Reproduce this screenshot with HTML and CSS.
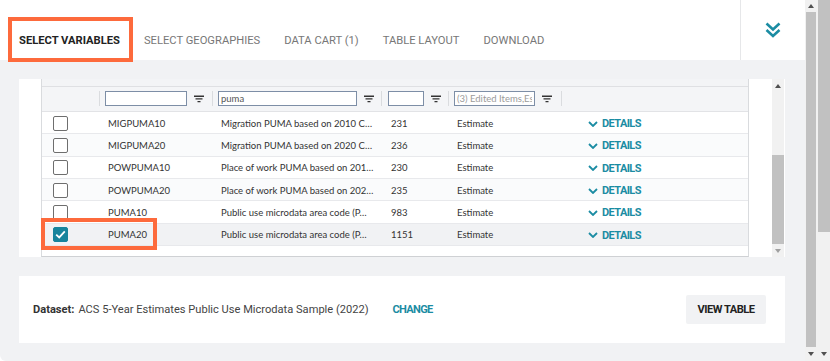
FILE: index.html
```html
<!DOCTYPE html>
<html lang="en">
<head>
<meta charset="utf-8">
<title>Select Variables</title>
<link rel="stylesheet" href="styles.css">
</head>
<body>
<div class="page">
  <div class="modal">
    <header class="modal-head">
      <nav class="tabs">
        <span class="tab active">SELECT VARIABLES</span>
        <span class="tab">SELECT GEOGRAPHIES</span>
        <span class="tab">DATA CART (1)</span>
        <span class="tab">TABLE LAYOUT</span>
        <span class="tab">DOWNLOAD</span>
      </nav>
      <div class="head-toggle">
        <svg width="16" height="16" viewBox="0 0 16 16" aria-hidden="true">
          <polyline points="1.5,1.5 8,7.5 14.5,1.5" fill="none" stroke="#1b8ca3" stroke-width="2.6"/>
          <polyline points="1.5,8 8,14 14.5,8" fill="none" stroke="#1b8ca3" stroke-width="2.6"/>
        </svg>
      </div>
    </header>

    <div class="modal-body">
      <section class="card table-card">
        <div class="grid">
          <div class="grid-top"></div>
          <div class="row head-row">
            <div class="cell"></div>
            <div class="cell fcell"><span class="sep"></span><input class="finput w1" type="text"><svg class="ficon" width="12" height="8" viewBox="0 0 12 8"><path d="M1 1.2H11M2.5 3.9H9.5M4.5 6.6H7.5" stroke="#333" stroke-width="1.4" fill="none"/></svg></div>
            <div class="cell fcell"><span class="sep"></span><input class="finput w2" type="text" value="puma"><svg class="ficon" width="12" height="8" viewBox="0 0 12 8"><path d="M1 1.2H11M2.5 3.9H9.5M4.5 6.6H7.5" stroke="#333" stroke-width="1.4" fill="none"/></svg></div>
            <div class="cell fcell"><span class="sep"></span><input class="finput w3" type="text"><svg class="ficon" width="12" height="8" viewBox="0 0 12 8"><path d="M1 1.2H11M2.5 3.9H9.5M4.5 6.6H7.5" stroke="#333" stroke-width="1.4" fill="none"/></svg></div>
            <div class="cell fcell"><span class="sep"></span><input class="finput w4" type="text" placeholder="(3) Edited Items,Estimate"><svg class="ficon" width="12" height="8" viewBox="0 0 12 8"><path d="M1 1.2H11M2.5 3.9H9.5M4.5 6.6H7.5" stroke="#333" stroke-width="1.4" fill="none"/></svg></div>
            <div class="cell fcell"><span class="sep"></span></div>
          </div>

          <div class="row">
            <div class="cell cbcell"><span class="cb"></span></div>
            <div class="cell txt">MIGPUMA10</div>
            <div class="cell txt">Migration PUMA based on 2010 C…</div>
            <div class="cell txt num">231</div>
            <div class="cell txt">Estimate</div>
            <div class="cell dcell"><span class="details"><svg width="10" height="6" viewBox="0 0 10 6"><polyline points="1,1 5,5 9,1" fill="none" stroke="#1b8ca3" stroke-width="1.8"/></svg>DETAILS</span></div>
          </div>
          <div class="row alt">
            <div class="cell cbcell"><span class="cb"></span></div>
            <div class="cell txt">MIGPUMA20</div>
            <div class="cell txt">Migration PUMA based on 2020 C…</div>
            <div class="cell txt num">236</div>
            <div class="cell txt">Estimate</div>
            <div class="cell dcell"><span class="details"><svg width="10" height="6" viewBox="0 0 10 6"><polyline points="1,1 5,5 9,1" fill="none" stroke="#1b8ca3" stroke-width="1.8"/></svg>DETAILS</span></div>
          </div>
          <div class="row">
            <div class="cell cbcell"><span class="cb"></span></div>
            <div class="cell txt">POWPUMA10</div>
            <div class="cell txt">Place of work PUMA based on 201…</div>
            <div class="cell txt num">230</div>
            <div class="cell txt">Estimate</div>
            <div class="cell dcell"><span class="details"><svg width="10" height="6" viewBox="0 0 10 6"><polyline points="1,1 5,5 9,1" fill="none" stroke="#1b8ca3" stroke-width="1.8"/></svg>DETAILS</span></div>
          </div>
          <div class="row alt">
            <div class="cell cbcell"><span class="cb"></span></div>
            <div class="cell txt">POWPUMA20</div>
            <div class="cell txt">Place of work PUMA based on 202…</div>
            <div class="cell txt num">235</div>
            <div class="cell txt">Estimate</div>
            <div class="cell dcell"><span class="details"><svg width="10" height="6" viewBox="0 0 10 6"><polyline points="1,1 5,5 9,1" fill="none" stroke="#1b8ca3" stroke-width="1.8"/></svg>DETAILS</span></div>
          </div>
          <div class="row">
            <div class="cell cbcell"><span class="cb"></span></div>
            <div class="cell txt">PUMA10</div>
            <div class="cell txt">Public use microdata area code (P…</div>
            <div class="cell txt num">983</div>
            <div class="cell txt">Estimate</div>
            <div class="cell dcell"><span class="details"><svg width="10" height="6" viewBox="0 0 10 6"><polyline points="1,1 5,5 9,1" fill="none" stroke="#1b8ca3" stroke-width="1.8"/></svg>DETAILS</span></div>
          </div>
          <div class="row selected">
            <div class="cell cbcell"><span class="cb checked"><svg width="11" height="9" viewBox="0 0 11 9"><polyline points="1.2,4.6 4.2,7.4 9.8,1.4" fill="none" stroke="#fff" stroke-width="1.8"/></svg></span></div>
            <div class="cell txt">PUMA20</div>
            <div class="cell txt">Public use microdata area code (P…</div>
            <div class="cell txt num">1151</div>
            <div class="cell txt">Estimate</div>
            <div class="cell dcell"><span class="details"><svg width="10" height="6" viewBox="0 0 10 6"><polyline points="1,1 5,5 9,1" fill="none" stroke="#1b8ca3" stroke-width="1.8"/></svg>DETAILS</span></div>
          </div>
          <div class="grid-fill"></div>
        </div>

        <div class="vscroll inner-sb">
          <div class="sb-btn"><span class="arr-up"></span></div>
          <div class="sb-track"><div class="sb-thumb"></div></div>
          <div class="sb-btn"><span class="arr-down"></span></div>
        </div>
      </section>

      <section class="card footer-card">
        <span class="ds-label">Dataset:</span>
        <span class="ds-name">ACS 5-Year Estimates Public Use Microdata Sample (2022)</span>
        <span class="change">CHANGE</span>
        <span class="view-btn">VIEW TABLE</span>
      </section>
    </div>

    <div class="hl hl-tab"></div>
    <div class="hl hl-row"></div>
  </div>

  <div class="vscroll modal-sb">
    <div class="sb-btn"><span class="arr-up"></span></div>
    <div class="sb-track"><div class="sb-thumb"></div></div>
    <div class="sb-btn"><span class="arr-down"></span></div>
  </div>
  <div class="vscroll page-sb">
    <div class="sb-track"><div class="sb-thumb"></div></div>
    <div class="sb-btn"><span class="arr-down"></span></div>
  </div>
</div>
</body>
</html>
```

FILE: styles.css
```css
* { box-sizing: border-box; }

html, body {
  margin: 0;
  width: 830px;
  height: 361px;
  overflow: hidden;
  background: #ffffff;
  font-family: Roboto, "Liberation Sans", sans-serif;
}

.page {
  display: flex;
  height: 361px;
}

.modal {
  position: relative;
  width: 805px;
  height: 361px;
  display: flex;
  flex-direction: column;
  background: #f1f2f4;
  border-bottom-left-radius: 6px;
  overflow: hidden;
}

/* header */
.modal-head {
  height: 60px;
  flex: none;
  display: flex;
  background: #ffffff;
}

.tabs {
  flex: 1;
  display: flex;
  align-items: flex-start;
  padding: 34px 0 0 7px;
}

.tab {
  padding: 0 12px;
  font-size: 11.2px;
  line-height: 14px;
  color: #777777;
  white-space: nowrap;
}

.tab.active {
  color: #222222;
  font-weight: 700;
}

.head-toggle {
  width: 65px;
  flex: none;
  border-left: 1px solid #e6e7e9;
  display: flex;
  align-items: center;
  justify-content: center;
}

/* body */
.modal-body {
  flex: 1;
  display: flex;
  flex-direction: column;
  gap: 19px;
  padding: 19px 20px 0 19px;
}

.card {
  background: #ffffff;
}

.table-card {
  height: 178px;
  display: flex;
  padding-left: 22px;
}

.grid {
  width: 708px;
  display: flex;
  flex-direction: column;
  border-left: 1px solid #d9dbde;
  border-right: 1px solid #d9dbde;
  border-bottom: 1px solid #cfd1d4;
}

.grid-top {
  height: 8px;
  flex: none;
  background: #f3f4f6;
  border-bottom: 1px solid #dfe0e3;
}

.row {
  display: grid;
  grid-template-columns: 57px 113px 169px 67px 113px 1fr;
  height: 22.33px;
  flex: none;
  border-bottom: 1px solid #e8e9ec;
  background: #ffffff;
}

.row.alt { background: #fafbfc; }
.row.selected { background: #f1f2f4; }

.head-row {
  height: 25px;
  background: #f4f5f7;
  border-bottom: 1px solid #e2e3e6;
}

.cell {
  display: flex;
  align-items: center;
  min-width: 0;
  overflow: hidden;
}

.fcell { padding-bottom: 1px; }

.sep {
  width: 1px;
  height: 15px;
  background: #dadcdf;
  flex: none;
}

.finput {
  height: 15px;
  margin: 0 0 0 5px;
  padding: 0 2px;
  border: 1px solid #7d8ea6;
  border-radius: 0;
  background: #ffffff;
  font-family: Lato, "Open Sans", sans-serif;
  font-size: 9.5px;
  color: #555555;
  outline: none;
}

.finput::placeholder { color: #9b9b9b; }

.w1 { width: 82px; }
.w2 { width: 139px; }
.w3 { width: 36px; margin-left: 6px; }
.w4 { width: 81px; }

.ficon {
  margin-left: 6px;
  flex: none;
}

.txt {
  padding: 1px 0 0 9px;
  font-family: Lato, "Open Sans", sans-serif;
  font-size: 9.5px;
  color: #333333;
  white-space: nowrap;
}

.num { padding-left: 10px; }

.cbcell { padding-left: 11px; padding-top: 1px; }

.cb {
  width: 15px;
  height: 15px;
  border: 1.5px solid #6e6e6e;
  border-radius: 2px;
  background: #ffffff;
  display: flex;
  align-items: center;
  justify-content: center;
}

.cb.checked {
  background: #17849c;
  border-color: #17849c;
}

.dcell { padding: 2px 0 0 27px; }

.details {
  display: flex;
  align-items: center;
  gap: 4px;
  font-size: 11px;
  font-weight: 700;
  letter-spacing: -0.6px;
  color: #1b8ca3;
}

.grid-fill { flex: 1; background: #ffffff; }

/* scrollbars */
.vscroll {
  display: flex;
  flex-direction: column;
  background: #f1f1f1;
  flex: none;
}

.sb-btn {
  height: 13px;
  flex: none;
  display: flex;
  align-items: center;
  justify-content: center;
}

.sb-track {
  flex: 1;
  display: flex;
  flex-direction: column;
}

.sb-thumb {
  background: #c1c1c1;
}

.arr-up, .arr-down {
  width: 0;
  height: 0;
  border-left: 3.5px solid transparent;
  border-right: 3.5px solid transparent;
}

.arr-up { border-bottom: 4px solid #505050; }
.arr-down { border-top: 4px solid #505050; }

.inner-sb {
  width: 12px;
  margin-left: 23px;
}

.inner-sb .sb-btn:first-child { height: 14px; }
.inner-sb .sb-track { padding-top: 62px; }
.inner-sb .sb-thumb { height: 89px; }
.inner-sb .arr-up, .inner-sb .arr-down { border-left-width: 3px; border-right-width: 3px; }
.inner-sb .arr-down { border-top-color: #a0a0a0; }

.modal-sb {
  width: 12px;
  padding: 0 1px;
}

.modal-sb .sb-btn:first-child { height: 12px; }
.modal-sb .sb-thumb { flex: 1; }
.modal-sb .sb-btn:last-child { height: 14px; }

.page-sb {
  width: 13px;
  padding-left: 1px;
  background: #f1f1f1;
}

.page-sb .sb-thumb { height: 232px; }
.page-sb .sb-btn { height: 14px; }

/* footer card */
.footer-card {
  height: 67px;
  flex: none;
  display: flex;
  align-items: center;
  padding: 0 19px 0 14px;
  font-size: 11.1px;
  color: #333333;
}

.ds-label {
  font-weight: 700;
  color: #333333;
}

.ds-name {
  margin-left: 4px;
  color: #444444;
}

.change {
  margin-left: 24px;
  font-weight: 700;
  letter-spacing: -0.7px;
  color: #1b8ca3;
}

.view-btn {
  margin-left: auto;
  width: 80px;
  height: 29px;
  display: flex;
  align-items: center;
  justify-content: center;
  background: #f1f2f4;
  border-radius: 2px;
  font-weight: 700;
  letter-spacing: -0.5px;
  color: #222222;
}

/* annotation highlights */
.hl {
  position: absolute;
  border: 4px solid #fd6a3c;
  pointer-events: none;
}

.hl-tab {
  left: 8px;
  top: 17px;
  width: 125px;
  height: 45px;
}

.hl-row {
  left: 41px;
  top: 218px;
  width: 116px;
  height: 32px;
}
```
